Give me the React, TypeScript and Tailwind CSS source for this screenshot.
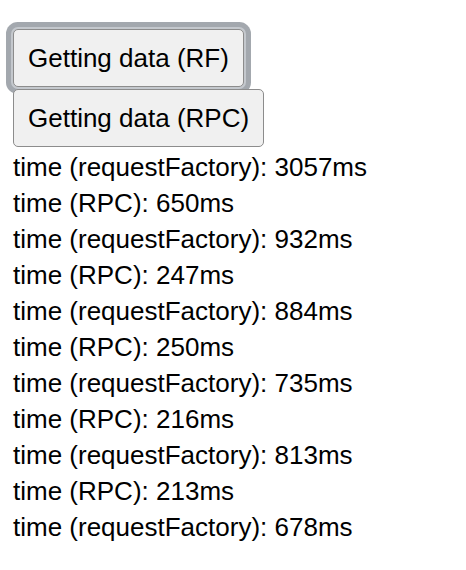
import React from "react";

const lines = [
  "time (requestFactory): 3057ms",
  "time (RPC): 650ms",
  "time (requestFactory): 932ms",
  "time (RPC): 247ms",
  "time (requestFactory): 884ms",
  "time (RPC): 250ms",
  "time (requestFactory): 735ms",
  "time (RPC): 216ms",
  "time (requestFactory): 813ms",
  "time (RPC): 213ms",
  "time (requestFactory): 678ms",
];

export default function App() {
  return (
    <div
      className="min-h-[570px] w-[466px] bg-white pl-[13px] pt-[29px] text-black"
      style={{ fontFamily: '"Liberation Sans", Arial, sans-serif' }}
    >
      <div className="flex flex-col items-start gap-[2px]">
        <button className="box-border h-[58px] rounded-[5px] border border-[#8c8c8c] bg-[#f0f0f0] px-[14px] text-[26px] leading-[30px] text-black shadow-[0_0_0_2px_#c4c8cd,0_0_0_7px_#a3a8ae]">
          Getting data (RF)
        </button>
        <button className="box-border h-[58px] rounded-[5px] border border-[#8c8c8c] bg-[#f0f0f0] px-[14px] text-[26px] leading-[30px] text-black">
          Getting data (RPC)
        </button>
      </div>
      <div className="mt-[2px] flex flex-col">
        {lines.map((l, i) => (
          <div key={i} className="text-[26px] leading-[36px]">
            {l}
          </div>
        ))}
      </div>
    </div>
  );
}
